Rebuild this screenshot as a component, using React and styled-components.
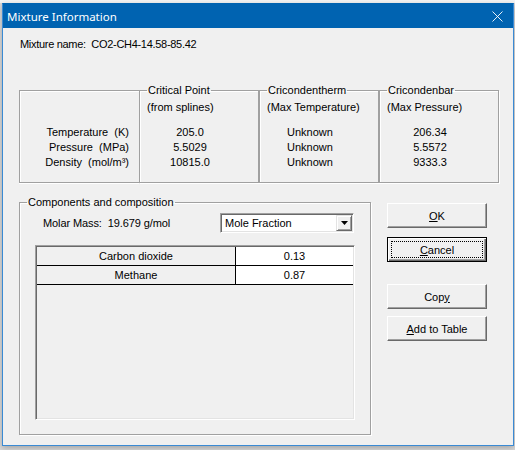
import React from 'react';
import styled, { createGlobalStyle } from 'styled-components';

const GlobalStyle = createGlobalStyle`
  html, body {
    margin: 0;
    padding: 0;
    background: #e4e4e4;
  }
  body {
    font-family: "Liberation Sans", Arial, sans-serif;
    font-size: 11px;
    color: #000;
  }
`;

const Desktop = styled.div`
  width: 515px;
  height: 450px;
  overflow: hidden;
  padding: 3px 0 0 2px;
  box-sizing: border-box;
  background: linear-gradient(#f4f4f4 0 3px, #d9d9d9 3px);
`;

const Window = styled.div`
  width: 512px;
  height: 443px;
  box-sizing: border-box;
  border: 1px solid #3a8ad4;
  border-top-color: #0063b1;
  background: #f0f0f0;
  display: flex;
  flex-direction: column;
  box-shadow: 0 2px 6px rgba(0, 0, 0, 0.25);
`;

const TitleBar = styled.div`
  height: 24px;
  flex: none;
  background: #0063b1;
  color: #fff;
  display: flex;
  align-items: center;
  justify-content: space-between;
  padding: 0 0 0 4px;
  font-family: "Noto Sans", "Liberation Sans", sans-serif;
  font-size: 11.5px;
`;

const CloseButton = styled.div`
  width: 30px;
  height: 24px;
  display: flex;
  align-items: center;
  justify-content: center;
  margin-right: 1px;
`;

const Client = styled.div`
  flex: 1;
  padding: 10px 0 0 16px;
`;

const NameLine = styled.div`
  line-height: 13px;
  padding-left: 1px;
  white-space: pre;
  letter-spacing: -0.3px;
`;

const PropsRow = styled.div`
  display: flex;
  margin-top: 33px;
`;

const LabelBox = styled.div`
  width: 120px;
  height: 93px;
  margin-top: 6px;
  box-sizing: border-box;
  border: 1px solid #a0a0a0;
  border-right: none;
  box-shadow: inset 1px 1px 0 #fff, 0 1px 0 #fff;
  padding: 34px 10px 0 0;
  text-align: right;
`;

const Group = styled.fieldset`
  margin: 0;
  padding: 0;
  min-width: 0;
  width: ${(p) => p.$w}px;
  height: ${(p) => p.$h}px;
  box-sizing: border-box;
  border: 1px solid #a0a0a0;
  box-shadow: inset 1px 1px 0 #fff, 1px 1px 0 #fff;
`;

const Legend = styled.legend`
  margin-left: ${(p) => p.$offset || 7}px;
  padding: 0 1px;
  line-height: 13px;
  font-size: 11px;
`;

const SubTitle = styled.div`
  padding: 4px 0 0 7px;
  line-height: 13px;
  white-space: nowrap;
`;

const Values = styled.div`
  margin: 11px 0 0 8px;
  width: 84px;
  text-align: center;
`;

const Line = styled.div`
  line-height: 15px;
  white-space: pre;
`;

const MainRow = styled.div`
  display: flex;
  margin-top: 13px;
`;

const MolarRow = styled.div`
  display: flex;
  align-items: center;
  height: 20px;
  margin-top: 4px;
  padding: 0 16px 0 23px;
`;

const MolarLabel = styled.div`
  flex: 1;
  white-space: pre;
  letter-spacing: -0.1px;
`;

const Select = styled.div`
  width: 134px;
  height: 20px;
  box-sizing: border-box;
  background: #fff;
  border: 1px solid;
  border-color: #a0a0a0 #fff #fff #a0a0a0;
  box-shadow: inset 1px 1px 0 #696969, inset -1px -1px 0 #e3e3e3;
  display: flex;
  align-items: center;
  padding: 0 1px 0 4px;
`;

const SelectText = styled.div`
  flex: 1;
`;

const ArrowButton = styled.div`
  width: 16px;
  height: 16px;
  box-sizing: border-box;
  background: #f0f0f0;
  border: 1px solid;
  border-color: #e3e3e3 #696969 #696969 #e3e3e3;
  box-shadow: inset 1px 1px 0 #fff, inset -1px -1px 0 #a0a0a0;
  display: flex;
  align-items: center;
  justify-content: center;
`;

const Grid = styled.div`
  margin: 12px 15px 0;
  height: 175px;
  box-sizing: border-box;
  background: #f0f0f0;
  border: 1px solid;
  border-color: #a0a0a0 #fff #fff #a0a0a0;
  box-shadow: inset 1px 1px 0 #696969, inset -1px -1px 0 #e3e3e3;
  padding: 1px 1px 0 1px;
`;

const GridRow = styled.div`
  display: grid;
  grid-template-columns: 199px 1fr;
  height: 19px;
  box-sizing: border-box;
  border-bottom: 1px solid #000;
`;

const Cell = styled.div`
  display: flex;
  align-items: center;
  justify-content: center;
  background: ${(p) => (p.$fixed ? '#f0f0f0' : '#fff')};
  border-right: ${(p) => (p.$fixed ? '1px solid #000' : 'none')};
`;

const ButtonColumn = styled.div`
  display: flex;
  flex-direction: column;
  margin-left: 16px;
  padding-top: 7px;
`;

const Button = styled.div`
  width: 100px;
  height: 25px;
  box-sizing: border-box;
  margin-top: ${(p) => p.$gap || 0}px;
  background: #f0f0f0;
  border: 1px solid;
  border-color: ${(p) => (p.$default ? '#000' : '#fff #696969 #696969 #fff')};
  box-shadow: ${(p) =>
    p.$default
      ? 'inset 1px 1px 0 #fff, inset -1px -1px 0 #696969, inset -2px -2px 0 #a0a0a0'
      : 'inset -1px -1px 0 #a0a0a0'};
  display: flex;
  align-items: center;
  justify-content: center;
  position: relative;
  font-size: 11px;
  u {
    text-decoration: underline;
    text-underline-offset: 1px;
  }
`;

const FocusRing = styled.div`
  position: absolute;
  inset: 3px;
  border: 1px dotted #000;
  pointer-events: none;
`;

const critical = [
  { title: 'Critical Point', sub: '(from splines)', values: ['205.0', '5.5029', '10815.0'] },
  { title: 'Cricondentherm', sub: '(Max Temperature)', values: ['Unknown', 'Unknown', 'Unknown'] },
  { title: 'Cricondenbar', sub: '(Max Pressure)', values: ['206.34', '5.5572', '9333.3'] },
];

const components = [
  { name: 'Carbon dioxide', value: '0.13' },
  { name: 'Methane', value: '0.87' },
];

const App = () => (
  <>
    <GlobalStyle />
    <Desktop>
      <Window>
        <TitleBar>
          <span>Mixture Information</span>
          <CloseButton>
            <svg width="11" height="11" viewBox="0 0 11 11">
              <path d="M0.5 0.5 L10.5 10.5 M10.5 0.5 L0.5 10.5" stroke="#fff" strokeWidth="0.9" />
            </svg>
          </CloseButton>
        </TitleBar>
        <Client>
          <NameLine>Mixture name:  CO2-CH4-14.58-85.42</NameLine>

          <PropsRow>
            <LabelBox>
              <Line>Temperature  (K)</Line>
              <Line>Pressure  (MPa)</Line>
              <Line>Density  (mol/m³)</Line>
            </LabelBox>
            {critical.map((g) => (
              <Group key={g.title} $w={120} $h={99}>
                <Legend>{g.title}</Legend>
                <SubTitle>{g.sub}</SubTitle>
                <Values>
                  {g.values.map((v, i) => (
                    <Line key={i}>{v}</Line>
                  ))}
                </Values>
              </Group>
            ))}
          </PropsRow>

          <MainRow>
            <Group $w={352} $h={239}>
              <Legend $offset={7}>Components and composition</Legend>
              <MolarRow>
                <MolarLabel>Molar Mass:  19.679 g/mol</MolarLabel>
                <Select>
                  <SelectText>Mole Fraction</SelectText>
                  <ArrowButton>
                    <svg width="7" height="4" viewBox="0 0 7 4">
                      <path d="M0 0 H7 L3.5 4 Z" fill="#000" />
                    </svg>
                  </ArrowButton>
                </Select>
              </MolarRow>
              <Grid>
                {components.map((c) => (
                  <GridRow key={c.name}>
                    <Cell $fixed>{c.name}</Cell>
                    <Cell>{c.value}</Cell>
                  </GridRow>
                ))}
              </Grid>
            </Group>

            <ButtonColumn>
              <Button>
                <span><u>O</u>K</span>
              </Button>
              <Button $default $gap={9}>
                <span><u>C</u>ancel</span>
                <FocusRing />
              </Button>
              <Button $gap={22}>
                <span>Cop<u>y</u></span>
              </Button>
              <Button $gap={7}>
                <span><u>A</u>dd to Table</span>
              </Button>
            </ButtonColumn>
          </MainRow>
        </Client>
      </Window>
    </Desktop>
  </>
);

export default App;
